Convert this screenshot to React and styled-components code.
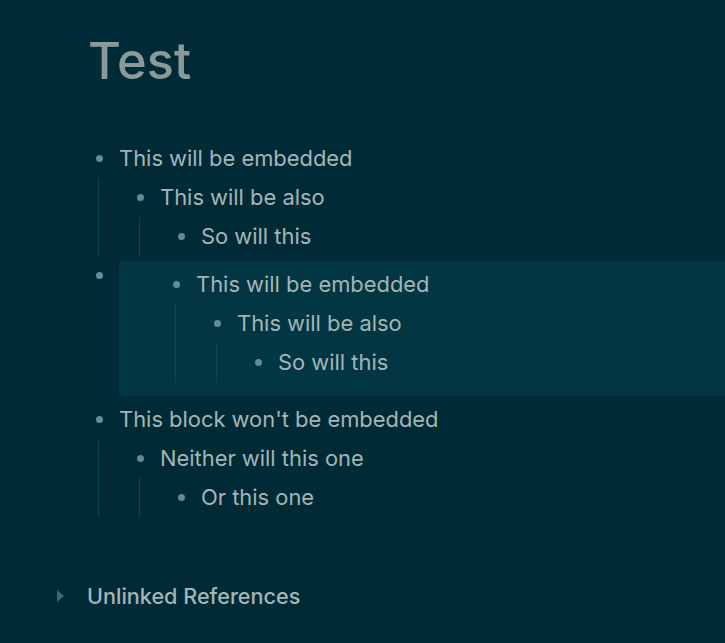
import React from "react";
import styled, { createGlobalStyle } from "styled-components";

const Global = createGlobalStyle`
  html, body { margin: 0; padding: 0; background: #002b36; }
  body { font-family: Inter, "Noto Sans", sans-serif; color: #a4b5b6; }
  * { box-sizing: border-box; }
`;

const Page = styled.div`
  width: 725px;
  height: 643px;
  background: #002b36;
  overflow: hidden;
  display: flex;
  flex-direction: column;
`;

const Title = styled.h1`
  margin: 0;
  padding: 29px 0 0 88px;
  height: 139px;
  font-size: 50.5px;
  font-weight: 500;
  line-height: 64px;
  color: #8a9a9b;
`;

const Blocks = styled.div`
  padding-left: 87px;
  display: flex;
  flex-direction: column;
`;

const Block = styled.div`
  display: flex;
  flex-direction: column;
`;

const Row = styled.div`
  display: flex;
  align-items: flex-start;
`;

const BulletBox = styled.div`
  width: 24px;
  height: 39px;
  flex: none;
  display: flex;
  align-items: center;
  justify-content: center;
`;

const Dot = styled.span`
  width: 7px;
  height: 7px;
  border-radius: 50%;
  background: #638e91;
`;

const Text = styled.div`
  margin-left: 8px;
  font-size: 21.9px;
  line-height: 39px;
  color: #a4b5b6;
  white-space: nowrap;
`;

const Children = styled.div`
  margin-left: 11px;
  border-left: 1px solid #0b4656;
  padding-left: 29px;
  display: flex;
  flex-direction: column;
`;

const Embed = styled.div`
  flex: 1;
  margin: 5px 0 4px 8px;
  padding: 4px 0 14px 45px;
  background: #023643;
  display: flex;
  flex-direction: column;
`;

const Refs = styled.div`
  margin-top: 64px;
  padding-left: 57px;
  display: flex;
  align-items: center;
  height: 30px;
`;

const Caret = styled.span`
  width: 0;
  height: 0;
  border-top: 6px solid transparent;
  border-bottom: 6px solid transparent;
  border-left: 7px solid #44676e;
  margin-right: 23px;
`;

const RefsLabel = styled.span`
  font-size: 21.6px;
  font-weight: 500;
  color: #a4b5b6;
`;

function Item({ text, children }) {
  return (
    <Block>
      <Row>
        <BulletBox><Dot /></BulletBox>
        {text !== undefined && <Text>{text}</Text>}
      </Row>
      {children && <Children>{children}</Children>}
    </Block>
  );
}

function Tree() {
  return (
    <Item text="This will be embedded">
      <Item text="This will be also">
        <Item text="So will this" />
      </Item>
    </Item>
  );
}

export default function App() {
  return (
    <Page>
      <Global />
      <Title>Test</Title>
      <Blocks>
        <Tree />
        <Block>
          <Row>
            <BulletBox><Dot /></BulletBox>
            <Embed>
              <Tree />
            </Embed>
          </Row>
        </Block>
        <Item text="This block won't be embedded">
          <Item text="Neither will this one">
            <Item text="Or this one" />
          </Item>
        </Item>
      </Blocks>
      <Refs>
        <Caret />
        <RefsLabel>Unlinked References</RefsLabel>
      </Refs>
    </Page>
  );
}
